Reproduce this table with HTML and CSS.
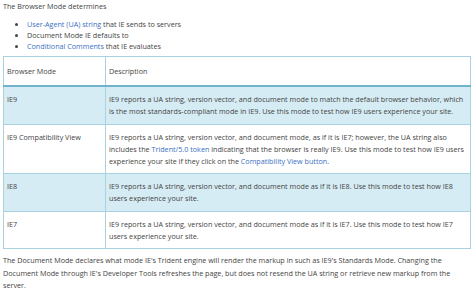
FILE: index.html
```html
<!DOCTYPE html>
<html>
<head>
<meta charset="utf-8">
<link rel="stylesheet" href="styles.css">
</head>
<body>
<div class="page">
  <p class="intro">The Browser Mode determines</p>
  <ul class="list">
    <li><a class="link">User-Agent (UA) string</a> that IE sends to servers</li>
    <li>Document Mode IE defaults to</li>
    <li><a class="link">Conditional Comments</a> that IE evaluates</li>
  </ul>
  <table class="modes">
    <thead>
      <tr><th class="c1">Browser Mode</th><th>Description</th></tr>
    </thead>
    <tbody>
      <tr class="alt"><td class="c1">IE9</td><td>IE9 reports a UA string, version vector, and document mode to match the default browser behavior, which is the most standards-compliant mode in IE9. Use this mode to test how IE9 users experience your site.</td></tr>
      <tr><td class="c1">IE9 Compatibility View</td><td>IE9 reports a UA string, version vector, and document mode, as if it is IE7; however, the UA string also includes the <a class="link">Trident/5.0 token</a> indicating that the browser is really IE9. Use this mode to test how IE9 users experience your site if they click on the <a class="link">Compatibility View button</a>.</td></tr>
      <tr class="alt"><td class="c1">IE8</td><td>IE9 reports a UA string, version vector, and document mode as if it is IE8. Use this mode to test how IE8 users experience your site.</td></tr>
      <tr><td class="c1">IE7</td><td>IE9 reports a UA string, version vector, and document mode as if it is IE7. Use this mode to test how IE7 users experience your site.</td></tr>
    </tbody>
  </table>
  <p class="outro">The Document Mode declares what mode IE's Trident engine will render the markup in such as IE9's Standards Mode. Changing the Document Mode through IE's Developer Tools refreshes the page, but does not resend the UA string or retrieve new markup from the server.</p>
</div>
</body>
</html>
```
FILE: styles.css
```css
html, body {
  margin: 0;
  padding: 0;
  background: #ffffff;
}
body {
  font-family: "Open Sans", "Noto Sans", sans-serif;
  font-size: 7.2px;
  color: #444444;
}
.page {
  padding: 0 3px 0 3px;
}
.intro {
  margin: 0;
  line-height: 12px;
}
.list {
  margin: 7px 0 0 0;
  padding: 0 0 0 24px;
  line-height: 11px;
}
.link {
  color: #3a6fc4;
  text-decoration: none;
}
.modes {
  margin-top: 4px;
  width: 100%;
  border-collapse: collapse;
  border: 1px solid #a9d2e0;
}
.modes th, .modes td {
  text-align: left;
  vertical-align: top;
  font-weight: normal;
  border-left: 1px solid #a9d2e0;
  border-right: 1px solid #a9d2e0;
  border-bottom: 1px solid #a9d2e0;
  padding: 6px 1px 6.5px 3px;
  line-height: 12px;
}
.modes th {
  padding: 8px 1px 8px 3px;
  border-bottom: 2px solid #6fb3cc;
}
.modes .c1 {
  width: 97px;
}
.modes tr.alt td {
  background: #d6ecf4;
}
.outro {
  margin: 5px 0 0 0;
  line-height: 12.5px;
}
```
